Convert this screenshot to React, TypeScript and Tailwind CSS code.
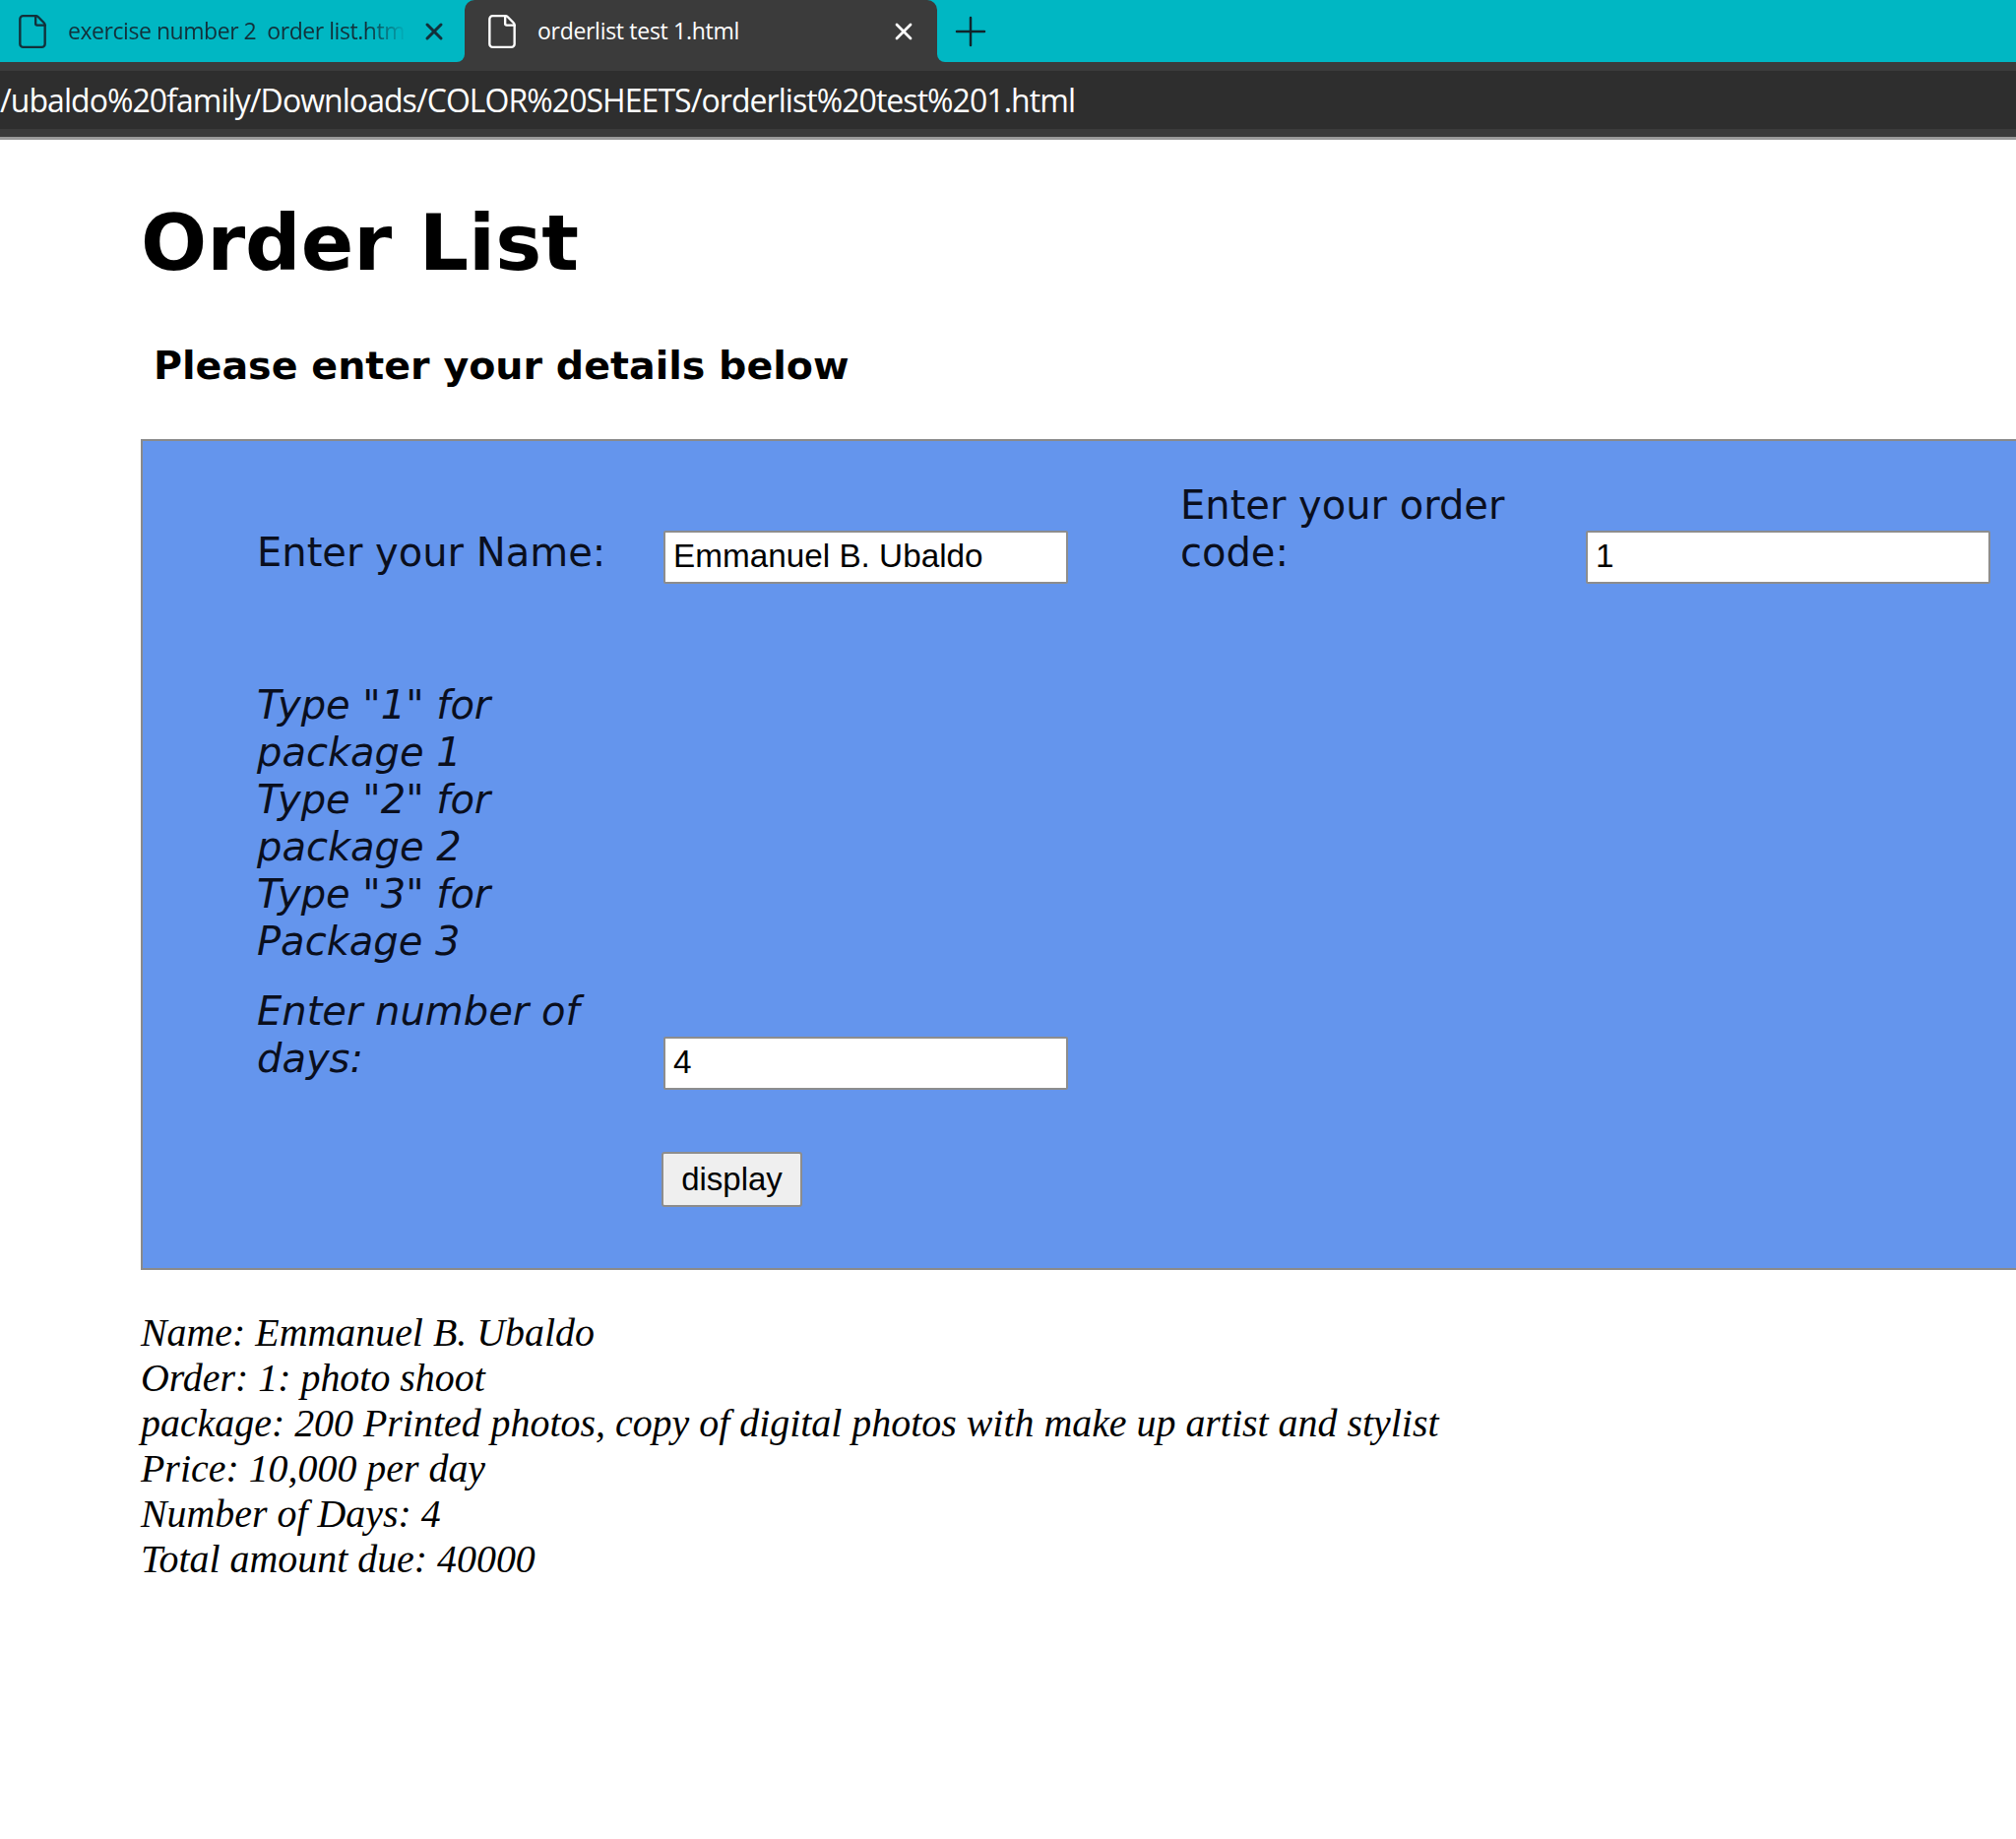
import { File, Plus, X } from 'lucide-react';

const results = [
  'Name: Emmanuel B. Ubaldo',
  'Order: 1: photo shoot',
  'package: 200 Printed photos, copy of digital photos with make up artist and stylist',
  'Price: 10,000 per day',
  'Number of Days: 4',
  'Total amount due: 40000',
];

const hints = ['Type "1" for', 'package 1', 'Type "2" for', 'package 2', 'Type "3" for', 'Package 3'];

const tabFont = "font-['Open_Sans','Noto_Sans',sans-serif]";
const verdana = "font-['DejaVu_Sans',sans-serif]";
const field =
  "h-[54px] w-[411px] rounded-[2px] border-2 border-[#8d8d8d] bg-white px-[8px] pb-[3px] font-['Liberation_Sans',sans-serif] text-[33.3px] text-black";

export default function App() {
  return (
    <div className="h-[1868px] w-[2048px] overflow-hidden bg-white">
      <div className={`flex h-[63px] bg-[#3b3b3b] ${tabFont}`}>
        <div className="flex h-[63px] w-[472px] items-center rounded-br-[8px] bg-[#00b7c3] pl-[14px] text-[#12303a]">
          <File className="h-[38px] w-[38px] shrink-0" strokeWidth={1.5} />
          <div className="ml-[17px] w-[344px] overflow-hidden whitespace-pre text-[23px] tracking-[-0.45px] [mask-image:linear-gradient(to_right,black_88%,transparent)]">
            exercise number 2  order list.html
          </div>
          <X className="ml-[14px] h-[28px] w-[28px] shrink-0" strokeWidth={2.6} />
        </div>
        <div className="h-[63px] w-[480px] bg-[#00b7c3]">
          <div className="flex h-[63px] items-center rounded-t-[10px] bg-[#3b3b3b] pl-[19px] text-white">
            <File className="h-[38px] w-[38px] shrink-0" strokeWidth={1.5} />
            <div className="ml-[17px] w-[358px] text-[23px] tracking-[-0.3px]">orderlist test 1.html</div>
            <X className="h-[28px] w-[28px] shrink-0" strokeWidth={2.4} />
          </div>
        </div>
        <div className="flex h-[63px] flex-1 items-center rounded-bl-[8px] bg-[#00b7c3] pl-[10px] text-[#10242b]">
          <Plus className="h-[48px] w-[48px]" strokeWidth={1.25} />
        </div>
      </div>

      <div className={`border-b-[3px] border-[#9a9a9a] bg-[#3b3b3b] pt-[9px] pb-[8px] ${tabFont}`}>
        <div className="flex h-[59px] items-center bg-[#2e2e2e] text-[32px] tracking-[-0.95px] text-white">
          /ubaldo%20family/Downloads/COLOR%20SHEETS/orderlist%20test%201.html
        </div>
      </div>

      <div className={`pl-[143px] text-black ${verdana}`}>
        <h1 className="pt-[60px] text-[79px] leading-[90px] font-bold">Order List</h1>
        <h2 className="pt-[54px] pl-[13px] text-[39.6px] leading-[50px] font-bold">Please enter your details below</h2>

        <div className="mt-[50px] h-[844px] w-[2000px] border-2 border-[#8a8a8a] bg-[#6495ed] pt-[41px] pl-[116px] text-[40px] leading-[48px] text-[#0a0f1e]">
          <div className="grid grid-cols-[413px_525px_412px_1fr] items-end">
            <div className="pb-[8px]">Enter your Name:</div>
            <input readOnly value="Emmanuel B. Ubaldo" className={field} />
            <div className="w-[360px] pb-[8px]">Enter your order code:</div>
            <input readOnly value="1" className={field} />
          </div>

          <div className="mt-[99px] italic">
            {hints.map((line) => (
              <div key={line}>{line}</div>
            ))}
          </div>

          <div className="mt-[23px] grid grid-cols-[413px_1fr] items-end">
            <div className="w-[360px] pb-[8px] italic">Enter number of days:</div>
            <input readOnly value="4" className={field} />
          </div>

          <div className="mt-[63px] pl-[411px]">
            <button className="block h-[56px] w-[143px] rounded-[3px] border-2 border-[#8d8d8d] bg-[#efefef] pb-[2px] font-['Liberation_Sans',sans-serif] text-[33px] leading-none text-black">
              display
            </button>
          </div>
        </div>

        <div className="pt-[41px] font-['Liberation_Serif',serif] text-[39.9px] leading-[46px] italic">
          {results.map((line) => (
            <div key={line}>{line}</div>
          ))}
        </div>
      </div>
    </div>
  );
}
